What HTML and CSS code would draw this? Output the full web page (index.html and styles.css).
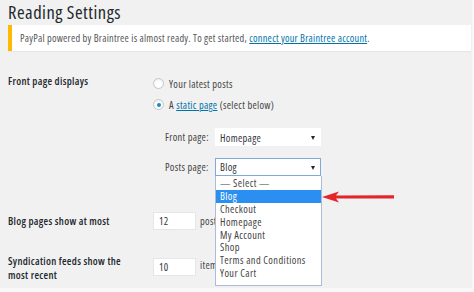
FILE: index.html
```html
<!DOCTYPE html>
<html lang="en">

<head>
    <meta charset="UTF-8" />
    <title>Reading Settings</title>
    <link rel="stylesheet" href="styles.css">
</head>

<body>
    <div class="wrap">
        <h1>Reading Settings</h1>

        <div class="notice">PayPal powered by Braintree is almost ready. To get started, <a href="#">connect your Braintree account</a>.</div>

        <div class="form-table">
            <div class="row row-front">
                <div class="label">Front page displays</div>
                <div class="field">
                    <div class="radio"><span class="dot"></span>Your latest posts</div>
                    <div class="radio"><span class="dot checked"></span>A&nbsp;<a href="#">static page</a>&nbsp;(select below)</div>

                    <div class="page-select first">
                        <span class="select-label">Front page:</span>
                        <div class="select">Homepage<span class="caret"></span></div>
                    </div>
                    <div class="page-select second">
                        <span class="select-label">Posts page:</span>
                        <div class="select focused">Blog<span class="caret"></span>
                            <ul class="dropdown">
                                <li>— Select —</li>
                                <li class="active">Blog</li>
                                <li>Checkout</li>
                                <li>Homepage</li>
                                <li>My Account</li>
                                <li>Shop</li>
                                <li>Terms and Conditions</li>
                                <li>Your Cart</li>
                            </ul>
                            <svg class="pointer" width="72" height="14" viewBox="0 0 72 14">
                                <polygon points="0,7 17,1.5 14,5.6 72,5.2 72,8.6 14,8.4 17,12.5" fill="#e3262b" />
                            </svg>
                        </div>
                    </div>
                </div>
            </div>

            <div class="row row-blog">
                <div class="label">Blog pages show at most</div>
                <div class="field inline"><span class="number">12</span><span class="unit">posts</span></div>
            </div>

            <div class="row row-feed">
                <div class="label">Syndication feeds show the most recent</div>
                <div class="field inline"><span class="number">10</span><span class="unit">items</span></div>
            </div>
        </div>
    </div>
</body>

</html>
```

FILE: styles.css
```css
body,
html {
    margin: 0;
    padding: 0;
    background-color: #f8f8f8;
    font-family: "Open Sans", "Noto Sans", sans-serif;
    font-stretch: 85%;
    letter-spacing: 0.3px;
    color: #444;
    overflow: hidden;
}

.wrap {
    width: 463px;
    height: 288px;
    padding: 0 1px 0 8px;
    background-color: #f1f1f1;
}

h1 {
    margin: 0;
    height: 25px;
    line-height: 24px;
    font-size: 18.5px;
    font-weight: 400;
    letter-spacing: 0.5px;
    color: #23282d;
}

.notice {
    height: 26px;
    line-height: 27px;
    padding-left: 8px;
    background-color: #fff;
    border-left: 4px solid #ffb900;
    box-shadow: 0 1px 1px rgba(0, 0, 0, 0.04);
    font-size: 10.3px;
    letter-spacing: 0.25px;
    white-space: nowrap;
    color: #555;
}

a {
    color: #0073aa;
    text-decoration: underline;
}

.row {
    display: grid;
    grid-template-columns: 145px 1fr;
}

.label {
    font-size: 10.6px;
    font-weight: 600;
    color: #23282d;
}

.row-front {
    padding-top: 20px;
}

.row-front .label {
    line-height: 20px;
}

.row-front .field {
    padding-top: 2px;
}

.radio {
    display: flex;
    align-items: center;
    height: 21px;
    font-size: 10.4px;
}

.dot {
    width: 9px;
    height: 9px;
    margin-right: 5px;
    border: 1px solid #c3c6c9;
    border-radius: 50%;
    background-color: #fff;
    display: flex;
    align-items: center;
    justify-content: center;
    box-shadow: inset 0 1px 2px rgba(0, 0, 0, 0.08);
}

.dot.checked::after {
    content: "";
    width: 4px;
    height: 4px;
    border-radius: 50%;
    background-color: #1e8cbe;
}

.page-select {
    display: flex;
    align-items: center;
    padding-left: 12px;
    font-size: 10.4px;
    white-space: nowrap;
}

.page-select.first {
    margin-top: 13px;
}

.page-select.second {
    margin-top: 12px;
}

.select-label {
    width: 50px;
}

.select {
    position: relative;
    box-sizing: border-box;
    width: 106px;
    height: 18px;
    line-height: 18px;
    padding-left: 4px;
    background-color: #fff;
    border: 1px solid #fff;
    color: #32373c;
}

.select.focused {
    border-color: #7fa9d6;
    line-height: 16px;
}

.caret {
    position: absolute;
    right: 5px;
    top: 7px;
    border-left: 2.5px solid transparent;
    border-right: 2.5px solid transparent;
    border-top: 4px solid #23282d;
}

.dropdown {
    position: absolute;
    top: 17px;
    left: -1px;
    width: 107px;
    box-sizing: border-box;
    margin: 0;
    padding: 1px 0 5px;
    list-style: none;
    background-color: #fff;
    border: 1px solid #a9bcd8;
    border-top: none;
}

.dropdown li {
    height: 12.9px;
    line-height: 12.9px;
    padding-left: 4px;
    letter-spacing: 0.4px;
    color: #444;
}

.dropdown li.active {
    background-color: #2b8ff1;
    color: #fff;
}

.pointer {
    position: absolute;
    left: 106px;
    top: 31px;
}

.inline {
    display: flex;
    align-items: center;
    font-size: 10.4px;
}

.number {
    box-sizing: border-box;
    width: 43px;
    height: 18px;
    line-height: 16px;
    padding-left: 5px;
    background-color: #fff;
    border: 1px solid #e6e6e6;
    color: #32373c;
}

.unit {
    margin-left: 4px;
}

.row-blog {
    padding-top: 36px;
}

.row-blog .label {
    line-height: 18px;
}

.row-feed {
    padding-top: 25px;
}

.row-feed .label {
    line-height: 13.5px;
    width: 122px;
}

.row-feed .field {
    align-items: flex-start;
    padding-top: 3px;
}
```
